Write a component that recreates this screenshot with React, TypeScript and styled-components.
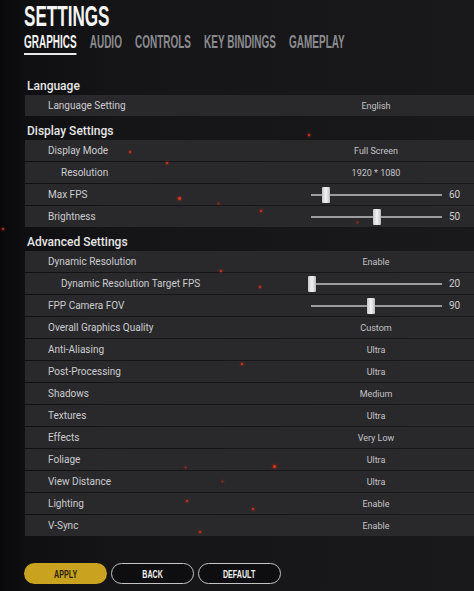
import React from "react";
import styled, { createGlobalStyle } from "styled-components";

const GlobalStyle = createGlobalStyle`
  html, body {
    margin: 0;
    padding: 0;
    background: #0d0d0f;
  }
  * {
    box-sizing: border-box;
  }
`;

const Page = styled.div`
  position: relative;
  width: 474px;
  height: 591px;
  overflow: hidden;
  font-family: Roboto, "Liberation Sans", sans-serif;
  background: linear-gradient(
    90deg,
    #08080a 0px,
    #0f0f11 24px,
    #151518 120px,
    #19191c 474px
  );
`;

const Header = styled.div`
  padding: 1px 0 0 24px;
  height: 72px;
`;

const HeaderInner = styled.div`
  display: flex;
  flex-direction: column;
  gap: 3px;
  width: max-content;
  transform: scaleX(0.57);
  transform-origin: left top;
  font-family: "Liberation Sans", Arial, sans-serif;
  font-weight: 700;
  white-space: nowrap;
`;

const Title = styled.div`
  font-size: 30px;
  line-height: 30px;
  color: #f4f4f4;
`;

const Tabs = styled.div`
  display: flex;
  gap: 23px;
`;

const Tab = styled.div<{ $active?: boolean }>`
  flex-shrink: 0;
  font-size: 17.5px;
  line-height: 17.5px;
  padding-bottom: 1px;
  color: ${(p) => (p.$active ? "#f2f2f2" : "#8b8b8f")};
  border-bottom: 2px solid ${(p) => (p.$active ? "#e8e8e8" : "transparent")};
`;

const Content = styled.div`
  padding-left: 25px;
`;

const SectionTitle = styled.div`
  height: 23px;
  display: flex;
  align-items: flex-end;
  padding: 0 0 2px 2px;
  font-size: 12px;
  line-height: 14px;
  font-weight: 500;
  color: #e6e6e6;
`;

const Row = styled.div`
  display: grid;
  grid-template-columns: 1fr 190px;
  align-items: center;
  height: 21px;
  margin-bottom: 1px;
  background: #29292c;
`;

const Label = styled.div<{ $sub?: boolean }>`
  padding-left: ${(p) => (p.$sub ? 36 : 23)}px;
  font-size: 10px;
  color: #cdcdcf;
  white-space: nowrap;
`;

const Value = styled.div`
  padding: 0 14px 0 8px;
  text-align: center;
  font-size: 9px;
  color: #c4c4c6;
`;

const SliderCell = styled.div`
  display: flex;
  justify-content: flex-end;
  align-items: center;
  gap: 7px;
  padding-right: 14px;
`;

const Track = styled.div`
  position: relative;
  width: 131px;
  height: 2px;
  background: #9c9c9f;
`;

const Thumb = styled.div`
  position: absolute;
  top: -7px;
  width: 8px;
  height: 16px;
  margin-left: -4px;
  border-radius: 1px;
  background: linear-gradient(90deg, #c9c9cb, #f2f2f2 50%, #bdbdc0);
  box-shadow: 0 0 1px rgba(0, 0, 0, 0.6);
`;

const Num = styled.div`
  width: 11px;
  text-align: right;
  font-size: 10px;
  color: #cfcfd1;
`;

const Footer = styled.div`
  display: flex;
  gap: 4px;
  padding: 26px 0 0 24px;
`;

const Button = styled.div<{ $primary?: boolean }>`
  width: 83px;
  height: 21px;
  border-radius: 11px;
  display: flex;
  align-items: center;
  justify-content: center;
  background: ${(p) => (p.$primary ? "#c9a21f" : "#0e0e10")};
  border: ${(p) => (p.$primary ? "none" : "1.5px solid #c4c4c6")};
  color: ${(p) => (p.$primary ? "#2a220b" : "#f2f2f2")};
  font-family: "Liberation Sans", Arial, sans-serif;
  font-weight: 700;
  font-size: 11.5px;
`;

const ButtonText = styled.span`
  display: inline-block;
  transform: scaleX(0.62);
`;

const Ember = styled.div<{ $size: number }>`
  position: absolute;
  width: ${(p) => p.$size}px;
  height: ${(p) => p.$size}px;
  border-radius: 50%;
  background: #d8321c;
  box-shadow: 0 0 2px 1px rgba(200, 40, 20, 0.45);
`;

type Item =
  | { label: string; sub?: boolean; value: string }
  | { label: string; sub?: boolean; slider: number; pos: number };

const sections: { title: string; items: Item[] }[] = [
  {
    title: "Language",
    items: [{ label: "Language Setting", value: "English" }],
  },
  {
    title: "Display Settings",
    items: [
      { label: "Display Mode", value: "Full Screen" },
      { label: "Resolution", sub: true, value: "1920 * 1080" },
      { label: "Max FPS", slider: 60, pos: 11.5 },
      { label: "Brightness", slider: 50, pos: 50 },
    ],
  },
  {
    title: "Advanced Settings",
    items: [
      { label: "Dynamic Resolution", value: "Enable" },
      { label: "Dynamic Resolution Target FPS", sub: true, slider: 20, pos: 0.5 },
      { label: "FPP Camera FOV", slider: 90, pos: 45.5 },
      { label: "Overall Graphics Quality", value: "Custom" },
      { label: "Anti-Aliasing", value: "Ultra" },
      { label: "Post-Processing", value: "Ultra" },
      { label: "Shadows", value: "Medium" },
      { label: "Textures", value: "Ultra" },
      { label: "Effects", value: "Very Low" },
      { label: "Foliage", value: "Ultra" },
      { label: "View Distance", value: "Ultra" },
      { label: "Lighting", value: "Enable" },
      { label: "V-Sync", value: "Enable" },
    ],
  },
];

const embers: [number, number, number][] = [
  [129, 151, 2],
  [166, 162, 1.5],
  [178, 197, 2.5],
  [218, 203, 1],
  [308, 134, 1.5],
  [260, 210, 1.5],
  [357, 222, 1],
  [2, 228, 2],
  [220, 270, 2],
  [259, 286, 2],
  [241, 363, 1.5],
  [273, 465, 2.5],
  [185, 467, 1],
  [222, 481, 1],
  [186, 500, 2],
  [252, 508, 1.5],
  [199, 531, 2],
];

export default function App() {
  return (
    <Page>
      <GlobalStyle />
      <Header>
        <HeaderInner>
          <Title>SETTINGS</Title>
          <Tabs>
            <Tab $active>GRAPHICS</Tab>
            <Tab>AUDIO</Tab>
            <Tab>CONTROLS</Tab>
            <Tab>KEY BINDINGS</Tab>
            <Tab>GAMEPLAY</Tab>
          </Tabs>
        </HeaderInner>
      </Header>

      <Content>
        {sections.map((s) => (
          <div key={s.title}>
            <SectionTitle>{s.title}</SectionTitle>
            {s.items.map((it) => (
              <Row key={it.label}>
                <Label $sub={it.sub}>{it.label}</Label>
                {"slider" in it ? (
                  <SliderCell>
                    <Track>
                      <Thumb style={{ left: `${it.pos}%` }} />
                    </Track>
                    <Num>{it.slider}</Num>
                  </SliderCell>
                ) : (
                  <Value>{it.value}</Value>
                )}
              </Row>
            ))}
          </div>
        ))}
      </Content>

      <Footer>
        <Button $primary>
          <ButtonText>APPLY</ButtonText>
        </Button>
        <Button>
          <ButtonText>BACK</ButtonText>
        </Button>
        <Button>
          <ButtonText>DEFAULT</ButtonText>
        </Button>
      </Footer>

      {embers.map(([x, y, r], i) => (
        <Ember key={i} $size={r} style={{ left: x, top: y }} />
      ))}
    </Page>
  );
}
